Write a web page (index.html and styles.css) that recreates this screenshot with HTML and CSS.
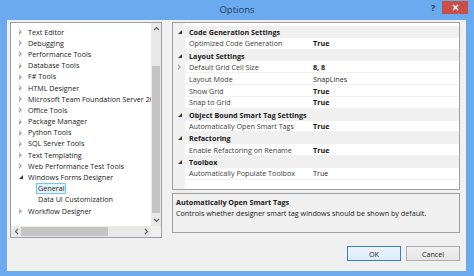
FILE: index.html
```html
<!DOCTYPE html>
<html>
<head>
<meta charset="utf-8">
<link rel="stylesheet" href="styles.css">
</head>
<body>
<div class="window">
  <div class="titlebar">
    <div class="title">Options</div>
    <div class="help">?</div>
    <div class="close"><svg width="7" height="7" viewBox="0 0 7 7"><path d="M1 1L6 6M6 1L1 6" stroke="#fff" stroke-width="1.4"/></svg></div>
  </div>
  <div class="client">
    <div class="main">
      <div class="treebox">
        <div class="tree-inner">
          <ul class="tree">
            <li class="node"><span class="arr closed"></span>Text Editor</li>
            <li class="node"><span class="arr closed"></span>Debugging</li>
            <li class="node"><span class="arr closed"></span>Performance Tools</li>
            <li class="node"><span class="arr closed"></span>Database Tools</li>
            <li class="node"><span class="arr closed"></span>F# Tools</li>
            <li class="node"><span class="arr closed"></span>HTML Designer</li>
            <li class="node"><span class="arr closed"></span>Microsoft Team Foundation Server 20</li>
            <li class="node"><span class="arr closed"></span>Office Tools</li>
            <li class="node"><span class="arr closed"></span>Package Manager</li>
            <li class="node"><span class="arr closed"></span>Python Tools</li>
            <li class="node"><span class="arr closed"></span>SQL Server Tools</li>
            <li class="node"><span class="arr closed"></span>Text Templating</li>
            <li class="node"><span class="arr closed"></span>Web Performance Test Tools</li>
            <li class="node"><span class="arr open"></span>Windows Forms Designer</li>
            <li class="node child"><span class="sel">General</span></li>
            <li class="node child">Data UI Customization</li>
            <li class="node"><span class="arr closed"></span>Workflow Designer</li>
          </ul>
          <div class="vscroll">
            <div class="sbtn"><svg width="7" height="5" viewBox="0 0 7 5"><path d="M1 4L3.5 1.5L6 4" fill="none" stroke="#606060" stroke-width="1.2"/></svg></div>
            <div class="vtrack"><div class="vthumb"></div></div>
            <div class="sbtn"><svg width="7" height="5" viewBox="0 0 7 5"><path d="M1 1L3.5 3.5L6 1" fill="none" stroke="#606060" stroke-width="1.2"/></svg></div>
          </div>
        </div>
        <div class="hscroll">
          <div class="hbtn"><svg width="5" height="7" viewBox="0 0 5 7"><path d="M4 1L1.5 3.5L4 6" fill="none" stroke="#606060" stroke-width="1.2"/></svg></div>
          <div class="htrack"><div class="hthumb"></div></div>
          <div class="hbtn"><svg width="5" height="7" viewBox="0 0 5 7"><path d="M1 1L3.5 3.5L1 6" fill="none" stroke="#606060" stroke-width="1.2"/></svg></div>
          <div class="corner"></div>
        </div>
      </div>
      <div class="rightcol">
        <div class="grid">
          <div class="row cat"><span class="m"><span class="arr open"></span></span><span class="name">Code Generation Settings</span></div>
          <div class="row prop"><span class="m"></span><span class="name">Optimized Code Generation</span><span class="val b">True</span></div>
          <div class="row cat"><span class="m"><span class="arr open"></span></span><span class="name">Layout Settings</span></div>
          <div class="row prop"><span class="m"><span class="arr closed"></span></span><span class="name">Default Grid Cell Size</span><span class="val b">8, 8</span></div>
          <div class="row prop"><span class="m"></span><span class="name">Layout Mode</span><span class="val">SnapLines</span></div>
          <div class="row prop"><span class="m"></span><span class="name">Show Grid</span><span class="val b">True</span></div>
          <div class="row prop"><span class="m"></span><span class="name">Snap to Grid</span><span class="val b">True</span></div>
          <div class="row cat"><span class="m"><span class="arr open"></span></span><span class="name">Object Bound Smart Tag Settings</span></div>
          <div class="row prop"><span class="m"></span><span class="name">Automatically Open Smart Tags</span><span class="val b">True</span></div>
          <div class="row cat"><span class="m"><span class="arr open"></span></span><span class="name">Refactoring</span></div>
          <div class="row prop"><span class="m"></span><span class="name">Enable Refactoring on Rename</span><span class="val b">True</span></div>
          <div class="row cat"><span class="m"><span class="arr open"></span></span><span class="name">Toolbox</span></div>
          <div class="row prop"><span class="m"></span><span class="name">Automatically Populate Toolbox</span><span class="val">True</span></div>
        </div>
        <div class="desc">
          <div class="desc-title">Automatically Open Smart Tags</div>
          <div class="desc-text">Controls whether designer smart tag windows should be shown by default.</div>
        </div>
      </div>
    </div>
    <div class="buttons">
      <div class="btn default">OK</div>
      <div class="btn">Cancel</div>
    </div>
  </div>
</div>
</body>
</html>
```
FILE: styles.css
```css
* { box-sizing: border-box; margin: 0; padding: 0; }
html, body { width: 474px; height: 276px; overflow: hidden; }
body { background: #6caaf0; font-family: "Open Sans", "Noto Sans", sans-serif; }
.window {
  width: 474px; height: 276px;
  background: #6caaf0;
  display: flex; flex-direction: column;
}
.titlebar {
  height: 20px; position: relative;
  display: flex; align-items: center; justify-content: center;
}
.title { font-size: 9.5px; color: #1f3b5e; line-height: 20px; }
.help {
  position: absolute; left: 431px; top: 2px;
  font-size: 9px; font-weight: bold; color: #1f3b5e; line-height: 12px;
}
.close {
  position: absolute; left: 442px; top: 1px; width: 26px; height: 13px;
  background: #c8504b;
  display: flex; align-items: center; justify-content: center;
}
.client {
  margin: 0 8px 5px 7px; flex: 1;
  background: #f0f0f0;
  display: flex; flex-direction: column;
  padding: 2px 6px 0 3px;
}
.main { display: flex; gap: 10px; }
.treebox {
  width: 152px; height: 216px;
  border: 1px solid #9aa0a8; background: #fff;
  display: flex; flex-direction: column;
}
.tree-inner { flex: 1; display: flex; min-height: 0; }
.tree {
  list-style: none; flex: 1; overflow: hidden;
  padding-top: 3px;
  font-size: 7.2px; color: #1a1a1a;
}
.node {
  height: 11.2px; line-height: 10px; white-space: nowrap; overflow: hidden;
  display: flex; align-items: center;
  padding-left: 6px;
}
.node.child { padding-left: 27px; }
.arr { display: inline-block; width: 10px; height: 7px; position: relative; flex: none; margin-right: 1px; }
.arr.closed::before {
  content: ""; position: absolute; left: 1.5px; top: 1px;
  border-left: 3.5px solid #a6a6a6; border-top: 3px solid transparent; border-bottom: 3px solid transparent;
}
.arr.closed::after {
  content: ""; position: absolute; left: 2.3px; top: 2.3px;
  border-left: 1.8px solid #fff; border-top: 1.7px solid transparent; border-bottom: 1.7px solid transparent;
}
.arr.open::before {
  content: ""; position: absolute; left: 1.5px; top: 1.5px;
  border-right: 4px solid #3a3a3a; border-top: 4px solid transparent;
}
.sel {
  background: #e5f3fb; border: 1px solid #7dc4ec;
  padding: 0 1px; line-height: 9px; height: 11px; display: inline-block;
  margin-left: -2px;
}
.vscroll { width: 10px; display: flex; flex-direction: column; background: #e8e8e8; flex: none; }
.sbtn { height: 11px; display: flex; align-items: center; justify-content: center; background: #e8e8e8; }
.vtrack { flex: 1; display: flex; flex-direction: column; padding-top: 32px; padding-bottom: 2px; }
.vthumb { flex: 1; background: #c4c4c4; margin: 0 1px; }
.hscroll { height: 11px; display: flex; background: #e8e8e8; }
.hbtn { width: 10px; display: flex; align-items: center; justify-content: center; }
.htrack { flex: 1; display: flex; padding: 1px 0; }
.hthumb { width: 87px; background: #c4c4c4; }
.corner { width: 10px; background: #f0f0f0; }
.rightcol { width: 288px; display: flex; flex-direction: column; gap: 3px; }
.grid {
  height: 168px; border: 1px solid #a0a0a0;
  padding-top: 3px;
  background: linear-gradient(#f0f0f0, #f0f0f0) 0 0 / 12px 100% no-repeat, #fff;
  font-size: 7.2px;
}
.row { height: 11.83px; line-height: 10px; display: flex; align-items: center; white-space: nowrap; }
.row .m { width: 12px; flex: none; display: flex; align-items: center; justify-content: center; }
.row .m .arr { width: 6px; margin: 0; }
.row.cat { background: #f0f0f0; font-weight: bold; color: #1a1a1a; }
.row.cat .name { padding-left: 4px; }
.row.prop { border-bottom: 1px solid #f0f0f0; }
.row.prop .name { width: 124px; padding-left: 4px; color: #3c3c3c; flex: none; }
.row .val { padding-left: 4px; color: #2a2a2a; }
.row .val.b { font-weight: bold; color: #111; }
.desc {
  height: 40px; border: 1px solid #a0a0a0; background: #f0f0f0;
  padding: 3px 3px; font-size: 7.2px; color: #1a1a1a;
}
.desc-title { font-weight: bold; line-height: 11px; }
.desc-text { line-height: 11px; }
.buttons { display: flex; justify-content: flex-end; gap: 5px; margin-top: 8px; }
.btn {
  width: 54px; height: 15px; font-size: 7.2px; color: #1e1e1e;
  border: 1px solid #acacac; background: linear-gradient(#f0f0f0, #e5e5e5);
  display: flex; align-items: center; justify-content: center;
}
.btn.default { border-color: #3c7fb1; background: linear-gradient(#ecf4fc, #dcecfc); }
```
